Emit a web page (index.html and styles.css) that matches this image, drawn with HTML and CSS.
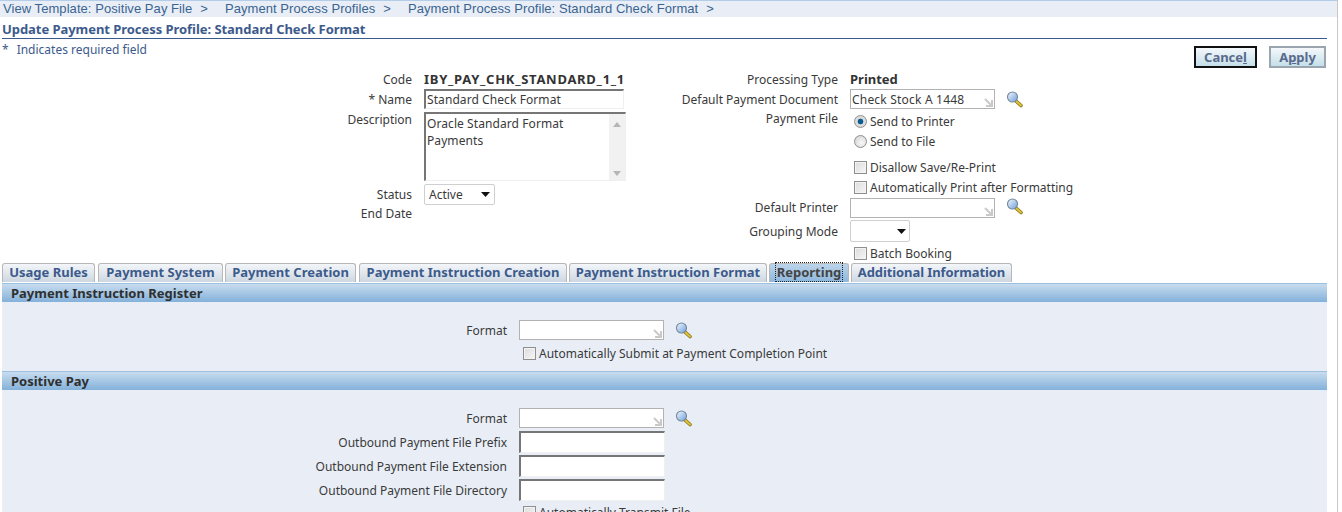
FILE: index.html
```html
<!DOCTYPE html>
<html lang="en">
<head>
<meta charset="utf-8">
<title>Update Payment Process Profile</title>
<link rel="stylesheet" href="styles.css">
</head>
<body>
<svg class="defs" width="0" height="0" aria-hidden="true">
  <defs>
    <linearGradient id="lens" x1="0" y1="0" x2="1" y2="1"><stop offset="0" stop-color="#f4f9fe"/><stop offset="1" stop-color="#6d9ed8"/></linearGradient>
    <g id="mag">
      <path d="M10 10 15 14.500" stroke="#8f7a1e" stroke-width="3.6" stroke-linecap="round"/>
      <path d="M10 10 15 14.500" stroke="#e0c53a" stroke-width="1.700" stroke-linecap="round"/>
      <circle cx="6.500" cy="6" r="5" fill="url(#lens)" stroke="#71859e" stroke-width="1.100"/>
    </g>
    <g id="lovmark"><path d="M1 1 7 7" stroke="#c9c9c9" stroke-width="2" fill="none"/><path d="M8 2V8H2" stroke="#c9c9c9" stroke-width="2" fill="none"/></g>
  </defs>
</svg>
<div class="page">
  <nav class="crumbs">
    <a>View Template: Positive Pay File</a><span class="sep">&gt;</span>
    <a>Payment Process Profiles</a><span class="sep">&gt;</span>
    <a>Payment Process Profile: Standard Check Format</a><span class="sep">&gt;</span>
  </nav>
  <h1 class="title">Update Payment Process Profile: Standard Check Format</h1>
  <div class="bar">
    <p class="req"><span class="star">*</span>Indicates required field</p>
    <div class="actions">
      <button class="btn btn-focus">Cance<u>l</u></button>
      <button class="btn">A<u>p</u>ply</button>
    </div>
  </div>

  <div class="form">
    <div class="col col-left">
      <div class="row"><label class="lbl">Code</label><strong class="val-strong val-code">IBY_PAY_CHK_STANDARD_1_1</strong></div>
      <div class="row"><label class="lbl">* Name</label><input class="text text-name" value="Standard Check Format"></div>
      <div class="row row-desc"><label class="lbl">Description</label>
        <div class="area"><span>Oracle Standard Format<br>Payments</span>
          <div class="sb"><svg width="8" height="5"><path d="M4 0 8 5H0Z" fill="#b5b5b5"/></svg><svg width="8" height="5"><path d="M4 5 8 0H0Z" fill="#b5b5b5"/></svg></div>
        </div>
      </div>
      <div class="row row-status"><label class="lbl">Status</label><div class="select select-status"><span>Active</span><svg width="9" height="5"><path d="M0 0H9L4.500 5Z" fill="#111"/></svg></div></div>
      <div class="row row-end"><label class="lbl">End Date</label></div>
    </div>
    <div class="col col-right">
      <div class="row"><label class="lbl">Processing Type</label><strong class="val-strong">Printed</strong></div>
      <div class="row"><label class="lbl">Default Payment Document</label>
        <div class="lov"><span>Check Stock A 1448</span><svg class="lovm" width="9" height="9"><use href="#lovmark"/></svg></div>
        <svg class="mag" width="17" height="17"><use href="#mag"/></svg></div>
      <div class="row row-radio"><label class="lbl">Payment File</label>
        <div class="stack">
          <label class="opt"><input type="radio" name="pf" checked>Send to Printer</label>
          <label class="opt"><input type="radio" name="pf">Send to File</label>
        </div>
      </div>
      <div class="row row-checks"><span class="lbl"></span>
        <div class="stack">
          <label class="opt"><input type="checkbox">Disallow Save/Re-Print</label>
          <label class="opt"><input type="checkbox">Automatically Print after Formatting</label>
        </div>
      </div>
      <div class="row row-printer"><label class="lbl">Default Printer</label>
        <div class="lov"><svg class="lovm" width="9" height="9"><use href="#lovmark"/></svg></div>
        <svg class="mag" width="17" height="17"><use href="#mag"/></svg></div>
      <div class="row row-group"><label class="lbl">Grouping Mode</label><div class="select select-group"><svg width="9" height="5"><path d="M0 0H9L4.500 5Z" fill="#111"/></svg></div></div>
      <div class="row row-batch"><span class="lbl"></span><label class="opt"><input type="checkbox">Batch Booking</label></div>
    </div>
  </div>

  <div class="tabs">
    <a class="tab t1">Usage Rules</a>
    <a class="tab t2">Payment System</a>
    <a class="tab t3">Payment Creation</a>
    <a class="tab t4">Payment Instruction Creation</a>
    <a class="tab t5">Payment Instruction Format</a>
    <a class="tab tab-on t6"><span>Reporting</span></a>
    <a class="tab t7">Additional Information</a>
  </div>

  <section class="panel">
    <h2 class="head">Payment Instruction Register</h2>
    <div class="pbody pbody-a">
      <div class="prow"><label class="lbl">Format</label>
        <div class="lov"><svg class="lovm" width="9" height="9"><use href="#lovmark"/></svg></div>
        <svg class="mag" width="17" height="17"><use href="#mag"/></svg></div>
      <div class="prow prow-check"><span class="lbl"></span><label class="opt"><input type="checkbox">Automatically Submit at Payment Completion Point</label></div>
    </div>
    <h2 class="head">Positive Pay</h2>
    <div class="pbody pbody-b">
      <div class="prow"><label class="lbl">Format</label>
        <div class="lov"><svg class="lovm" width="9" height="9"><use href="#lovmark"/></svg></div>
        <svg class="mag" width="17" height="17"><use href="#mag"/></svg></div>
      <div class="prow prow-in"><label class="lbl">Outbound Payment File Prefix</label><input class="text text-p"></div>
      <div class="prow prow-in"><label class="lbl">Outbound Payment File Extension</label><input class="text text-p"></div>
      <div class="prow prow-in"><label class="lbl">Outbound Payment File Directory</label><input class="text text-p"></div>
      <div class="prow prow-last"><span class="lbl"></span><label class="opt"><input type="checkbox">Automatically Transmit File</label></div>
    </div>
  </section>
</div>
</body>
</html>
```
FILE: styles.css
```css
* { box-sizing: border-box; }
html, body { margin: 0; height: 512px; overflow: hidden; background: #fff; }
body { font-family: "Noto Sans", "DejaVu Sans", sans-serif; font-size: 12px; color: #3a3a3a; }
.defs { display: block; height: 0; }
.page { width: 1338px; height: 512px; border-right: 1px solid #c8c8c8; overflow: hidden; }

.crumbs { height: 17px; background: #e9eef6; border-top: 1px solid #b3cde8; color: #3a6491; padding-left: 3px; display: flex; align-items: center; line-height: 16px; font-family: "Liberation Sans", sans-serif; font-size: 13px; letter-spacing: .06px; }
.crumbs .sep { margin: 0 17px 0 8px; }

.title { margin: 0 0 0 2px; width: 1325px; height: 22px; border-bottom: 1px solid #3a5a8c; padding-top: 5px; font-size: 13px; line-height: 15px; letter-spacing: -.05px; font-weight: 700; color: #3c5a8c; }

.bar { display: flex; justify-content: space-between; height: 30px; padding: 0 11px 0 2px; }
.req { margin: 3px 0 0; line-height: 16px; color: #3c5a8c; }
.star { margin-right: 8px; }
.actions { display: flex; gap: 12px; padding-top: 7px; }
.btn { height: 22px; padding: 0; width: 57px; font: 700 13px/18px "Noto Sans", sans-serif; color: #5a6a8c; background: linear-gradient(#f4f8fb, #c4dfe9); border: 2px solid #9aa5b0; }
.btn-focus { width: 63px; border-color: #111; }

.form { display: flex; height: 194px; }
.col { display: flex; flex-direction: column; }
.col-left { width: 638px; }
.row { display: flex; align-items: center; height: 20px; flex: none; }
.lbl { flex: none; text-align: right; }
.col-left .lbl { width: 412px; margin-right: 12px; }
.col-right .lbl { width: 200px; margin-right: 12px; }
.val-strong { font-weight: 700; font-size: 13px; color: #333; }
.val-code { letter-spacing: .72px; }

.text { display: block; height: 20px; padding: 0 1px; font: inherit; letter-spacing: .08px; color: inherit; background: #fff; border-style: solid; border-width: 2px 1px 1px 2px; border-color: #767676 #f0f0f0 #f0f0f0 #767676; outline: 0; }
.text-name { width: 200px; }
.text-p { width: 146px; height: 22px; }

.row.row-desc { align-items: flex-start; height: 72px; margin-top: 3px; }
.row-desc .lbl { margin-top: -2px; line-height: 20px; }
.area { width: 202px; height: 69px; padding: 2px 18px 0 1px; position: relative; line-height: 16.500px; letter-spacing: .08px; background: #fff; border-style: solid; border-width: 2px 1px 1px 2px; border-color: #767676 #f0f0f0 #f0f0f0 #767676; }
.sb { position: absolute; top: 0; right: 0; bottom: 0; width: 16px; background: #f1f1f1; display: flex; flex-direction: column; justify-content: space-between; align-items: center; padding: 8px 0 4px; }
.row.row-status { height: 22px; margin-top: -1px; }
.row.row-end { height: 17px; }

.select { display: flex; align-items: center; justify-content: space-between; background: #fff; border: 1px solid #cfcfcf; border-radius: 2px; padding: 0 4px; }
.select-status { width: 71px; height: 21px; }
.select-group { width: 60px; height: 22px; justify-content: flex-end; padding-right: 3px; }

.lov { position: relative; flex: none; width: 145px; height: 20px; padding: 0 1px; line-height: 19px; letter-spacing: .2px; background: #fff; border: 1px solid #b2b2b2; }
.lovm { position: absolute; right: 1px; bottom: 1px; }
.mag { flex: none; margin-left: 11px; }

.stack { display: flex; flex-direction: column; }
.opt { display: flex; align-items: center; height: 20px; padding-left: 4px; }
.opt input { appearance: none; flex: none; margin: 0 3px 0 0; width: 13px; height: 13px; }
.opt input[type=checkbox] { border: 1px solid #8e8f8f; background: linear-gradient(135deg, #dcdcdc, #f6f6f6); box-shadow: inset 0 0 0 1px #f3f3f3; }
.opt input[type=radio] { border: 1px solid #8e8f8f; border-radius: 50%; background: radial-gradient(circle at 60% 60%, #f8f8f8, #cfcfcf); }
.opt input[type=radio]:checked { background: radial-gradient(circle, #0b5c93 0 2.500px, #dcdcdc 3.200px); }
.row.row-radio { align-items: flex-start; height: 48px; }
.row-radio .lbl { line-height: 20px; }
.row-radio .stack { margin-top: 2px; }
.row.row-checks { height: 40px; }
.row.row-printer { height: 22px; align-items: flex-start; padding-top: 1px; }
.row.row-printer .lbl { line-height: 20px; }
.row.row-group { height: 24px; }
.row.row-batch { height: 20px; }

.tabs { display: flex; gap: 2px; height: 20px; padding-left: 2px; }
.tab { flex: none; height: 19px; text-align: center; line-height: 16px; font-weight: 700; font-size: 13px; color: #3c5a8c; background: linear-gradient(#f3f6f9, #cdd7e1); border: 1px solid #b7b7b7; border-bottom: 0; border-radius: 3px 3px 0 0; }
.t1 { width: 93px; margin-right: 1px; }
.t2 { width: 125px; }
.t3 { width: 131px; margin-right: 1px; }
.t4 { width: 208px; }
.t5 { width: 198px; }
.t6 { width: 80px; }
.t7 { width: 161px; letter-spacing: -.1px; }
.tab-on { color: #444; background: linear-gradient(#bcd4ea, #8db7dd); }
.tab-on span { outline: 1px dotted #222; padding: 0 1px; }

.panel { margin-left: 2px; width: 1325px; height: 229px; background: #e9eef6; }
.head { margin: 0; height: 19px; padding-left: 9px; font-size: 13px; line-height: 19px; font-weight: 700; color: #2f2f2f; background: linear-gradient(#c8dcef, #84b1da); border-top: 1px solid #9ec0df; }
.pbody-a { height: 69px; padding-top: 18px; }
.pbody-b { padding-top: 18px; }
.prow { display: flex; align-items: center; height: 20px; }
.prow .lbl { width: 505px; margin-right: 12px; }
.prow-check { margin-top: 3px; }
.prow.prow-in { height: 22px; margin-top: 2px; }
.prow.prow-in:nth-child(2) { margin-top: 3px; }
.prow-last { margin-top: 1px; }
```
